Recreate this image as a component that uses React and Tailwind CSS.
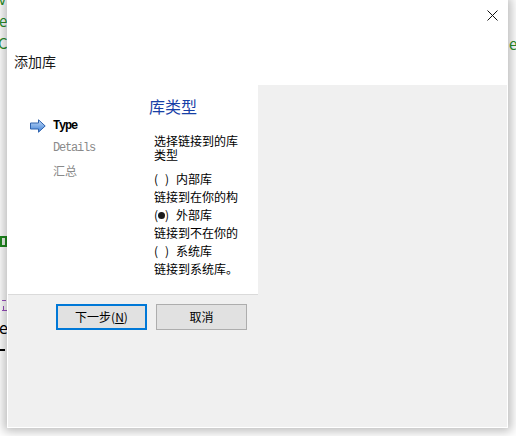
function Radio({ checked }) {
  return (
    <span className="flex items-center justify-between w-[15px] mr-[7px] shrink-0">
      <span>(</span>
      {checked && <span className="inline-block w-[7px] h-[7px] rounded-full bg-[#1a1a1a]" />}
      <span>)</span>
    </span>
  );
}

export default function App() {
  const cjk = { fontFamily: '"Noto Sans CJK SC", "Noto Sans", sans-serif' };
  const mono = { fontFamily: '"Liberation Mono", monospace' };
  return (
    <div className="relative w-[516px] h-[436px] bg-white overflow-hidden" style={cjk}>
      {/* background fragments behind the dialog */}
      <span className="absolute left-[-2px] top-[-9px] text-[15px] leading-[15px] text-[#2a8f2a]">V</span>
      <span className="absolute left-[-1px] top-[13px] text-[15px] leading-[15px] text-[#2a8f2a]">e</span>
      <span className="absolute left-[-2px] top-[35px] text-[15px] leading-[15px] text-[#2a8f2a]">C</span>
      <div className="absolute left-0 top-[236px] w-[7px] h-[11px] border-2 border-[#1f8a1f] bg-[#e8f3e8]" />
      <div className="absolute left-[2px] top-[300px] w-[4px] h-[1px] bg-[#9b4fc0]" />
      <div className="absolute left-[3px] top-[306px] w-[1px] h-[5px] bg-[#9b4fc0]" />
      <div className="absolute left-[2px] top-[310px] w-[5px] h-[1px] bg-[#9b4fc0]" />
      <span className="absolute left-[-1px] top-[319px] text-[16px] leading-[16px] text-black">e</span>
      <div className="absolute left-0 top-[349px] w-[5px] h-[2px] bg-black" />
      <span className="absolute left-[509px] top-[36px] text-[15px] leading-[15px] text-[#2a8f2a]">e</span>

      {/* dialog window */}
      <div className="relative ml-[7px] w-[501px] h-[428px] bg-[#f0f0f0] border-r border-b border-l border-white shadow-[0_0_10px_3px_rgba(0,0,0,0.28)] flex flex-col">
        {/* header */}
        <div className="relative h-[85px] bg-white shrink-0">
          <div className="pt-[52px] pl-[6px] text-[14px] leading-[18px] text-[#1a1a1a]">添加库</div>
          <svg className="absolute top-[10px] right-[9px]" width="11" height="11" viewBox="0 0 11 11">
            <path d="M0.5 0.5 L10.5 10.5 M10.5 0.5 L0.5 10.5" stroke="#111" strokeWidth="1" fill="none" />
          </svg>
        </div>

        {/* body */}
        <div className="flex h-[210px] shrink-0">
          <div className="w-[250px] bg-white border-b border-[#dadada] flex overflow-hidden">
            {/* steps */}
            <div className="w-[141px] shrink-0 pl-[22px] pt-[30px] flex flex-col">
              <div className="flex items-center h-[22px]">
                <svg width="16" height="14" viewBox="0 0 16 14" className="mr-[7px]">
                  <defs>
                    <linearGradient id="ag" x1="0" y1="0" x2="0" y2="1">
                      <stop offset="0" stopColor="#c4dcf8" />
                      <stop offset="1" stopColor="#3d7fd6" />
                    </linearGradient>
                  </defs>
                  <polygon points="0.5,4 8.5,4 8.5,0.8 15.2,7 8.5,13.2 8.5,10 0.5,10" fill="url(#ag)" stroke="#2f62ad" strokeWidth="1" />
                </svg>
                <span className="text-[12px] tracking-[-1.2px] font-semibold text-black" style={mono}>Type</span>
              </div>
              <div className="h-[22px] flex items-center pl-[23px] text-[12px] tracking-[-1.2px] text-[#8a8a8a]" style={mono}>Details</div>
              <div className="h-[23px] flex items-center pl-[23px] text-[12px] text-[#8a8a8a]">汇总</div>
            </div>
            {/* content */}
            <div className="flex flex-col pt-[11px] shrink-0">
              <div className="text-[16px] leading-[20px] text-[#1740a6]">库类型</div>
              <div className="mt-[18px] ml-[5px] w-[92px] text-[12px] leading-[14px] text-black">选择链接到的库类型</div>
              <div className="mt-[8px] ml-[5px] w-[96px] text-[12px] leading-[18px] text-black flex flex-col">
                <div className="flex items-center whitespace-nowrap">
                  <Radio />内部库
                </div>
                <div className="whitespace-nowrap overflow-hidden">链接到在你的构</div>
                <div className="flex items-center whitespace-nowrap">
                  <Radio checked />外部库
                </div>
                <div className="whitespace-nowrap overflow-hidden">链接到不在你的</div>
                <div className="flex items-center whitespace-nowrap">
                  <Radio />系统库
                </div>
                <div className="whitespace-nowrap overflow-hidden">链接到系统库。</div>
              </div>
            </div>
          </div>
          <div className="flex-1 bg-[#f0f0f0]" />
        </div>

        {/* buttons */}
        <div className="flex gap-[9px] pl-[48px] pt-[9px]">
          <button className="w-[91px] h-[26px] bg-[#e1e1e1] border-2 border-[#0078d7] text-[12px] text-black flex items-center justify-center">
            下一步(<span className="underline">N</span>)
          </button>
          <button className="w-[91px] h-[26px] bg-[#e1e1e1] border border-[#adadad] text-[12px] text-black flex items-center justify-center">
            取消
          </button>
        </div>
      </div>
    </div>
  );
}
